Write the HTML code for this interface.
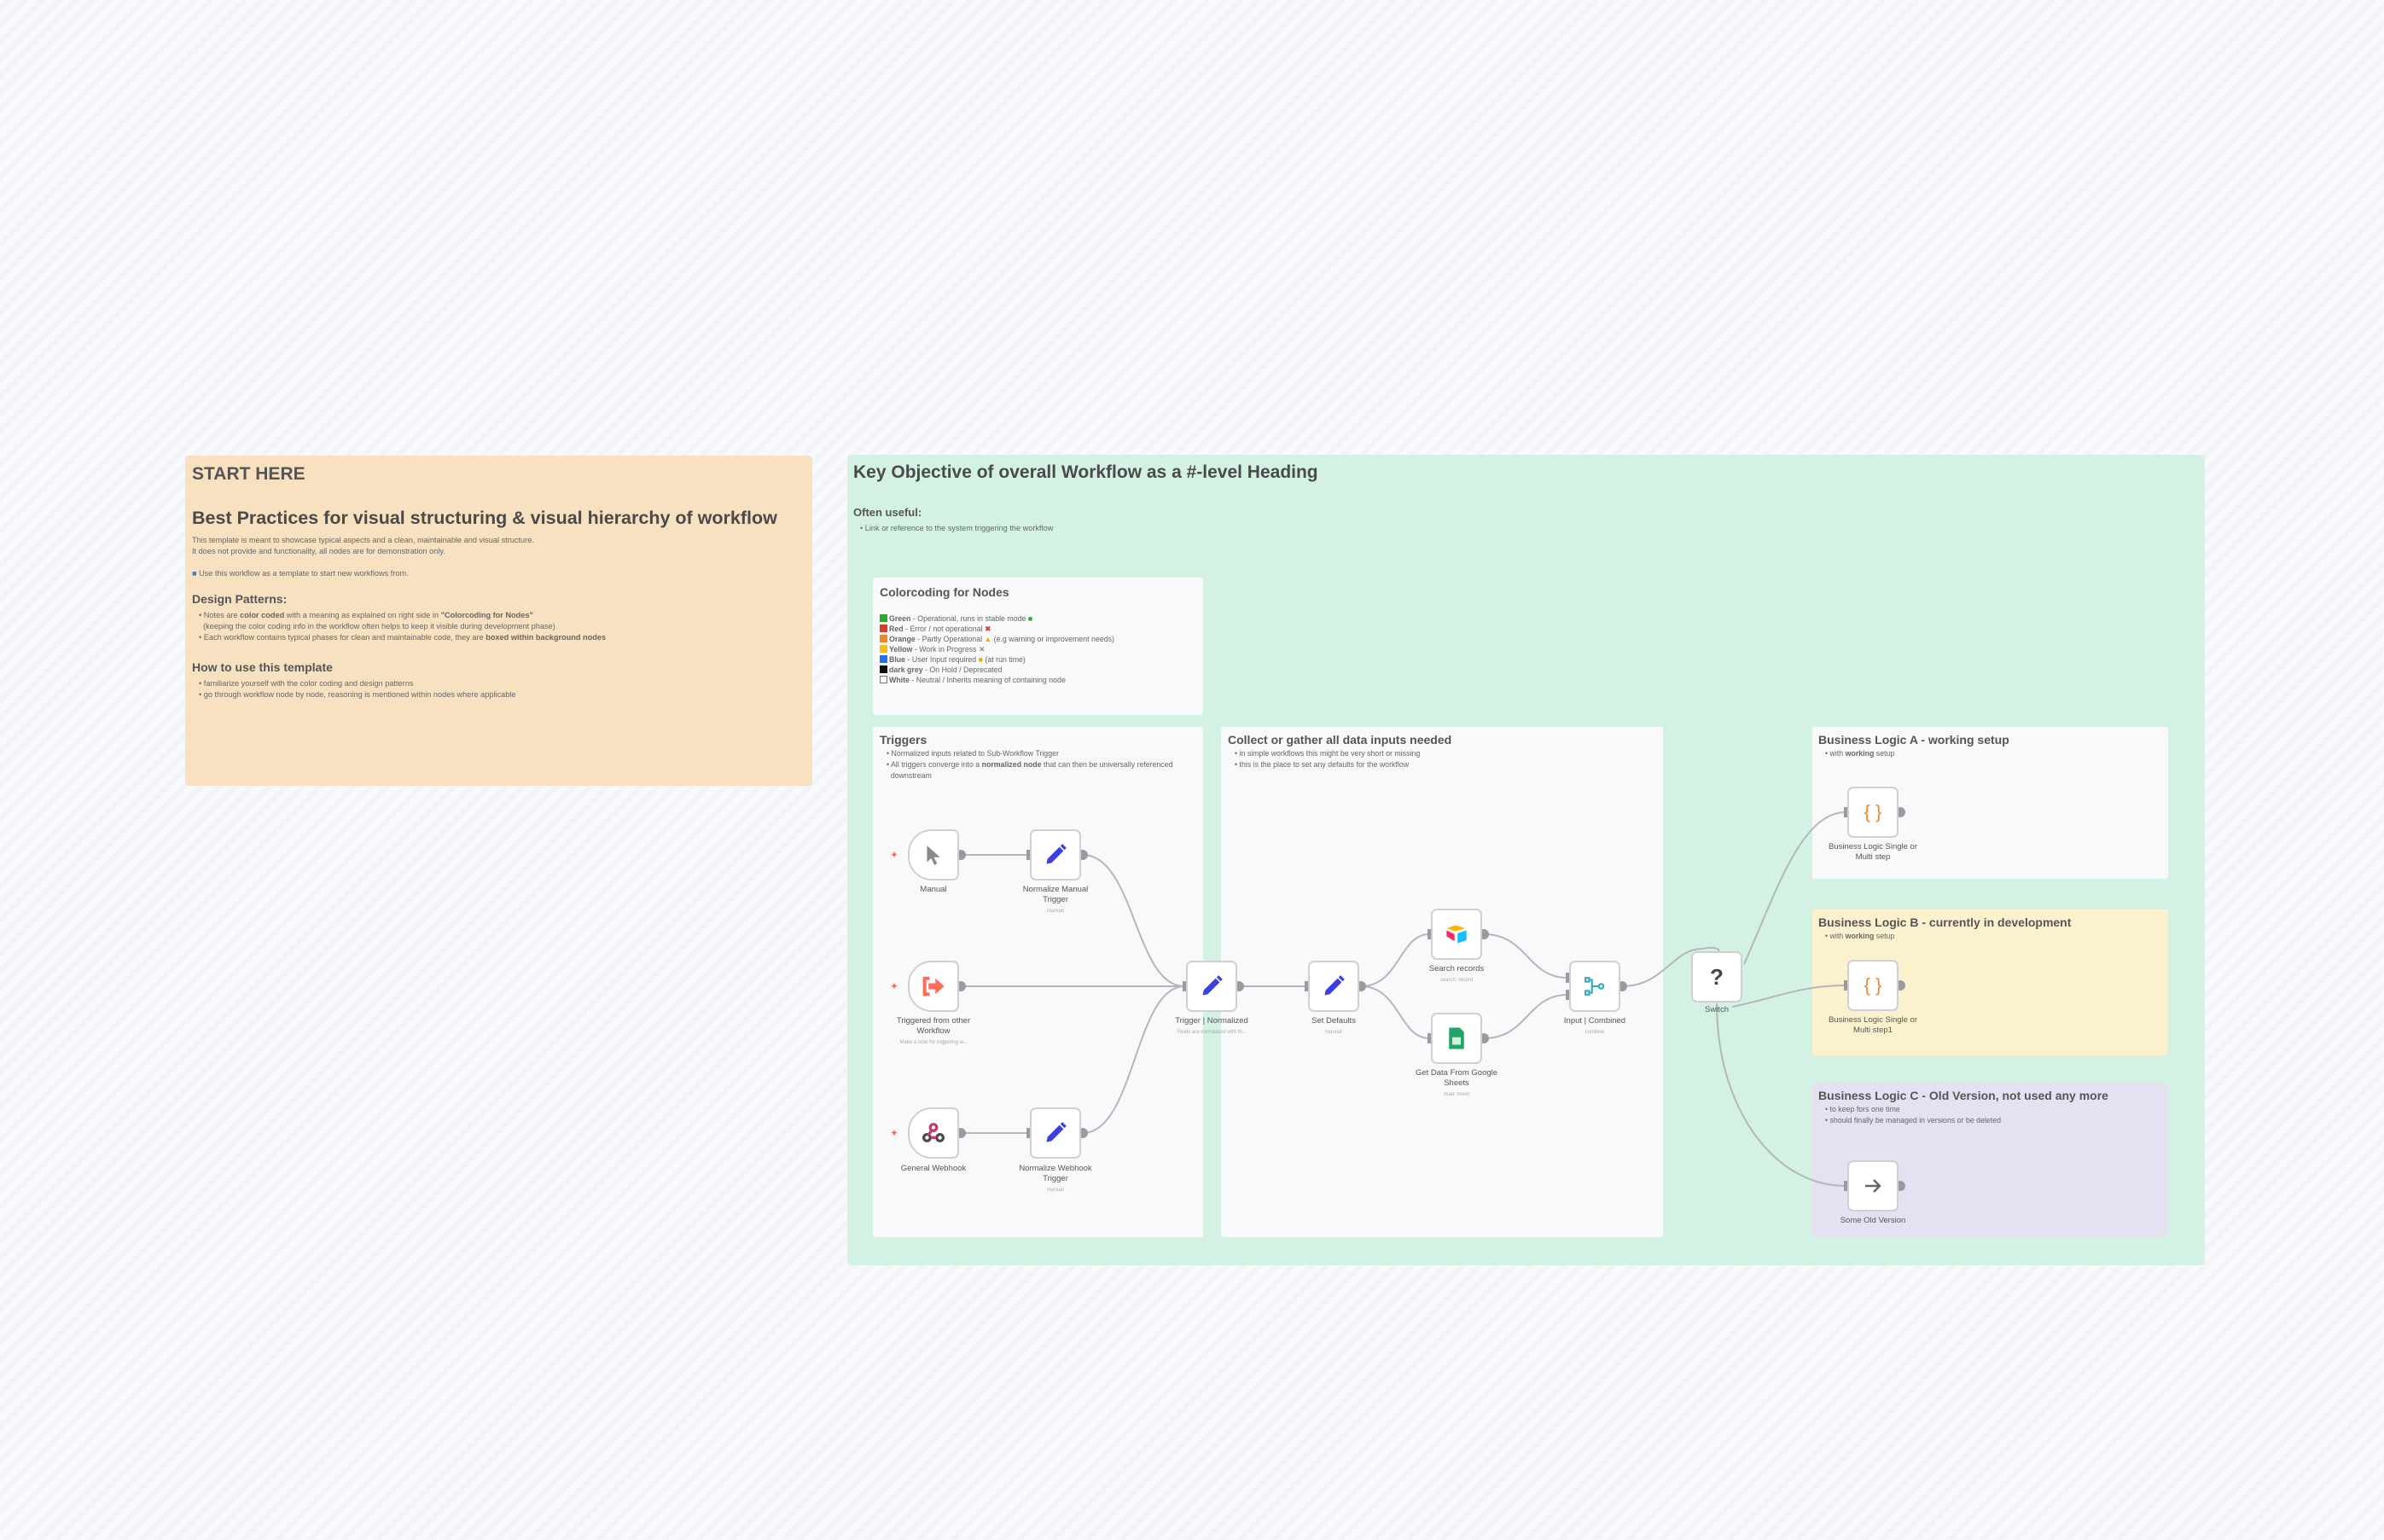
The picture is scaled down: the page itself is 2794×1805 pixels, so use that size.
<!DOCTYPE html>
<html><head><meta charset="utf-8"><style>
*{box-sizing:border-box;margin:0;padding:0}
body{width:2794px;height:1805px;overflow:hidden;position:relative;font-family:"Liberation Sans",sans-serif;color:#444;
background:repeating-linear-gradient(-45deg,#f8f9fb 0,#f8f9fb 8px,#f3f4f7 8px,#f3f4f7 14px);}
.note{position:absolute;border-radius:4px}
.wn{position:absolute;background:#f8f9fb;border-radius:3px}
.h2{font-size:14px;font-weight:bold;color:#555}
.sm{font-size:9.2px;color:#666;line-height:13px}
ul{list-style:none;padding-left:8px}
ul li:before{content:"• ";}
.node{position:absolute;width:60px;height:60px;background:#fff;border:2px solid #cfd0d4;border-radius:7px;display:flex;align-items:center;justify-content:center}
.trig{border-radius:28px 7px 7px 28px}
.lbl{position:absolute;width:140px;text-align:center;font-size:9.5px;color:#555;line-height:12px}
.sub{font-size:6px;color:#aaa}
.sw{display:inline-block;width:9px;height:9px;vertical-align:-1px;margin-right:2px}
</style></head><body>

<div class="note" style="left:217px;top:534px;width:735px;height:387px;background:#f8e1c0">
 <div style="position:absolute;left:8px;top:10px;font-size:21px;font-weight:bold;color:#555">START HERE</div>
 <div style="position:absolute;left:8px;top:61px;font-size:21.5px;font-weight:bold;color:#4a4a4a">Best Practices for visual structuring &amp; visual hierarchy of workflow</div>
 <div class="sm" style="position:absolute;left:8px;top:93px">This template is meant to showcase typical aspects and a clean, maintainable and visual structure.<br>It does not provide and functionality, all nodes are for demonstration only.<br><br><span style="color:#3a7bd5">■</span> Use this workflow as a template to start new workflows from.</div>
 <div style="position:absolute;left:8px;top:160px;font-size:14px;font-weight:bold;color:#555">Design Patterns:</div>
 <div class="sm" style="position:absolute;left:8px;top:181px"><ul><li>Notes are <b>color coded</b> with a meaning as explained on right side in <b>"Colorcoding for Nodes"</b><br>&nbsp;&nbsp;(keeping the color coding info in the workflow often helps to keep it visible during development phase)</li><li>Each workflow contains typical phases for clean and maintainable code, they are <b>boxed within background nodes</b></li></ul></div>
 <div style="position:absolute;left:8px;top:240px;font-size:14px;font-weight:bold;color:#555">How to use this template</div>
 <div class="sm" style="position:absolute;left:8px;top:261px"><ul><li>familiarize yourself with the color coding and design patterns</li><li>go through workflow node by node, reasoning is mentioned within nodes where applicable</li></ul></div>
</div>

<div class="note" style="left:993px;top:533px;width:1591px;height:950px;background:#d4f2e4">
 <div style="position:absolute;left:7px;top:9px;font-size:21px;font-weight:bold;color:#4a4a4a">Key Objective of overall Workflow as a #-level Heading</div>
 <div style="position:absolute;left:7px;top:60px;font-size:13px;font-weight:bold;color:#555">Often useful:</div>
 <div class="sm" style="position:absolute;left:7px;top:80px"><ul><li>Link or reference to the system triggering the workflow</li></ul></div>
</div>

<div class="wn" style="left:1023px;top:677px;width:387px;height:161px">
 <div class="h2" style="position:absolute;left:8px;top:9px">Colorcoding for Nodes</div>
 <div class="sm" style="position:absolute;left:8px;top:42px;line-height:12px;font-size:8.8px">
 <span class="sw" style="background:#2ea62e"></span><b>Green</b> - Operational, runs in stable mode <span style="color:#2ea62e">■</span><br>
 <span class="sw" style="background:#d63b2b"></span><b>Red</b> - Error / not operational <span style="color:#e03030">✖</span><br>
 <span class="sw" style="background:#f0872e"></span><b>Orange</b> - Partly Operational <span style="color:#e8b400">▲</span> (e.g warning or improvement needs)<br>
 <span class="sw" style="background:#f4bd1e"></span><b>Yellow</b> - Work in Progress ✕<br>
 <span class="sw" style="background:#2c6ee8"></span><b>Blue</b> - User Input required <span style="color:#e8b400">■</span> (at run time)<br>
 <span class="sw" style="background:#111"></span><b>dark grey</b> - On Hold / Deprecated<br>
 <span class="sw" style="background:#fff;border:1px solid #777"></span><b>White</b> - Neutral / Inherits meaning of containing node</div>
</div>

<div class="wn" style="left:1023px;top:852px;width:387px;height:598px">
 <div class="h2" style="position:absolute;left:8px;top:7px">Triggers</div>
 <div class="sm" style="position:absolute;left:8px;top:25px;line-height:13px;font-size:8.8px"><ul><li>Normalized inputs related to Sub-Workflow Trigger</li><li>All triggers converge into a <b>normalized node</b> that can then be universally referenced<br>&nbsp;&nbsp;downstream</li></ul></div>
</div>
<div class="wn" style="left:1431px;top:852px;width:518px;height:598px">
 <div class="h2" style="position:absolute;left:8px;top:7px">Collect or gather all data inputs needed</div>
 <div class="sm" style="position:absolute;left:8px;top:25px;line-height:13px;font-size:8.8px"><ul><li>in simple workflows this might be very short or missing</li><li>this is the place to set any defaults for the workflow</li></ul></div>
</div>
<div class="wn" style="left:2124px;top:852px;width:417px;height:178px">
 <div class="h2" style="position:absolute;left:7px;top:7px">Business Logic A - working setup</div>
 <div class="sm" style="position:absolute;left:7px;top:25px;font-size:8.8px"><ul><li>with <b>working</b> setup</li></ul></div>
</div>
<div class="wn" style="left:2124px;top:1066px;width:417px;height:171px;background:#fcf1cf">
 <div class="h2" style="position:absolute;left:7px;top:7px">Business Logic B - currently in development</div>
 <div class="sm" style="position:absolute;left:7px;top:25px;font-size:8.8px"><ul><li>with <b>working</b> setup</li></ul></div>
</div>
<div class="wn" style="left:2124px;top:1269px;width:417px;height:181px;background:#e4e1f2">
 <div class="h2" style="position:absolute;left:7px;top:7px">Business Logic C - Old Version, not used any more</div>
 <div class="sm" style="position:absolute;left:7px;top:25px;line-height:13px;font-size:8.8px"><ul><li>to keep fors one time</li><li>should finally be managed in versions or be deleted</li></ul></div>
</div>

<svg style="position:absolute;left:0;top:0" width="2794" height="1805" fill="none" stroke="#b5b6ba" stroke-width="2">
 <path d="M1126 1002 H1205"/>
 <path d="M1269 1002 C1330 1002 1330 1156 1388 1156"/>
 <path d="M1126 1156 H1388"/>
 <path d="M1269 1328 C1330 1328 1330 1156 1388 1156"/>
 <path d="M1126 1328 H1205"/>
 <path d="M1452 1156 H1531"/>
 <path d="M1595 1156 C1640 1156 1640 1095 1675 1095"/>
 <path d="M1595 1156 C1640 1156 1640 1217 1675 1217"/>
 <path d="M1739 1095 C1790 1095 1790 1146 1837 1146"/>
 <path d="M1739 1217 C1790 1217 1790 1166 1837 1166"/>
 <path d="M1901 1156 C1950 1156 1960 1112 1995 1112 C2005 1110 2015 1110 2015 1116"/>
 <path d="M2044 1130 C2080 1050 2110 952 2163 952"/>
 <path d="M2030 1180 C2080 1170 2110 1155 2163 1155"/>
 <path d="M2012 1176 C2012 1300 2080 1390 2163 1390"/>
 <g fill="#9a9b9f" stroke="none">
  <circle cx="1126" cy="1002" r="6"/><circle cx="1269" cy="1002" r="6"/><circle cx="1126" cy="1156" r="6"/>
  <circle cx="1126" cy="1328" r="6"/><circle cx="1269" cy="1328" r="6"/><circle cx="1452" cy="1156" r="6"/>
  <circle cx="1595" cy="1156" r="6"/><circle cx="1739" cy="1095" r="6"/><circle cx="1739" cy="1217" r="6"/>
  <circle cx="1901" cy="1156" r="6"/><circle cx="2227" cy="952" r="6"/><circle cx="2227" cy="1155" r="6"/><circle cx="2227" cy="1390" r="6"/>
  <rect x="1203" y="996" width="4" height="12"/><rect x="1386" y="1150" width="4" height="12"/><rect x="1203" y="1322" width="4" height="12"/>
  <rect x="1529" y="1150" width="4" height="12"/><rect x="1673" y="1089" width="4" height="12"/><rect x="1673" y="1211" width="4" height="12"/>
  <rect x="1835" y="1140" width="4" height="12"/><rect x="1835" y="1160" width="4" height="12"/>
  <rect x="2161" y="946" width="4" height="12"/><rect x="2161" y="1149" width="4" height="12"/><rect x="2161" y="1384" width="4" height="12"/>
 </g>
 <g fill="#ff6d5a" stroke="none" font-size="12"><text x="1043" y="1006">✦</text><text x="1043" y="1160">✦</text><text x="1043" y="1332">✦</text></g>
</svg>

<div class="node trig" style="left:1064px;top:972px"><svg width="26" height="26" viewBox="0 0 24 24"><path d="M5 2 L5 20 L9.5 15.5 L13 23 L16 21.5 L12.5 14.5 L19 14.5 Z" fill="#8a8a8a"/></svg></div>
<div class="node" style="left:1207px;top:972px"><svg width="28" height="28" viewBox="0 0 24 24"><path d="M3 21 L4 16 L16 4 L20 8 L8 20 Z M17 3 L19 1 L23 5 L21 7 Z" fill="#3b40e0"/></svg></div>
<div class="node trig" style="left:1064px;top:1126px"><svg width="30" height="26" viewBox="0 0 26 22"><path d="M9 3 H4 V19 H9" stroke="#ff6d5a" stroke-width="3.5" fill="none"/><path d="M8 8 H15 V3 L24 11 L15 19 V14 H8 Z" fill="#ff6d5a"/></svg></div>
<div class="node trig" style="left:1064px;top:1298px"><svg width="26" height="26" viewBox="0 0 24 24" fill="none" stroke-width="3"><circle cx="12" cy="6" r="3.5" stroke="#c73a63"/><circle cx="5" cy="17" r="3.5" stroke="#4b4b4b"/><circle cx="19" cy="17" r="3.5" stroke="#4b4b4b"/><path d="M10 9 L6 15 M9 17 H15" stroke="#c73a63"/></svg></div>
<div class="node" style="left:1207px;top:1298px"><svg width="28" height="28" viewBox="0 0 24 24"><path d="M3 21 L4 16 L16 4 L20 8 L8 20 Z M17 3 L19 1 L23 5 L21 7 Z" fill="#3b40e0"/></svg></div>
<div class="node" style="left:1390px;top:1126px"><svg width="28" height="28" viewBox="0 0 24 24"><path d="M3 21 L4 16 L16 4 L20 8 L8 20 Z M17 3 L19 1 L23 5 L21 7 Z" fill="#3b40e0"/></svg></div>
<div class="node" style="left:1533px;top:1126px"><svg width="28" height="28" viewBox="0 0 24 24"><path d="M3 21 L4 16 L16 4 L20 8 L8 20 Z M17 3 L19 1 L23 5 L21 7 Z" fill="#3b40e0"/></svg></div>
<div class="node" style="left:1677px;top:1065px"><svg width="28" height="26" viewBox="0 0 24 22"><path d="M11 2 L21 5 L11 8 L2 5 Z" fill="#fcb400"/><path d="M13 10 L22 7 V17 L13 20 Z" fill="#18bfff"/><path d="M2 7 L10 11 V18 L2 13 Z" fill="#f82b60"/></svg></div>
<div class="node" style="left:1677px;top:1187px"><svg width="20" height="28" viewBox="0 0 16 22"><path d="M1 1 H11 L15 5 V21 H1 Z" fill="#23a566"/><rect x="4" y="10" width="8" height="7" fill="#fff" opacity=".8"/></svg></div>
<div class="node" style="left:1839px;top:1126px"><svg width="26" height="26" viewBox="0 0 24 24" fill="none" stroke="#3aa8c1" stroke-width="2"><rect x="2" y="3" width="4" height="4"/><rect x="2" y="17" width="4" height="4"/><circle cx="19" cy="12" r="2.5"/><path d="M6 5 H9 V19 H6 M9 12 H16.5"/></svg></div>
<div class="node" style="left:1982px;top:1115px;font-size:26px;font-weight:bold;color:#444">?</div>
<div class="node" style="left:2165px;top:922px;font-size:22px;color:#f0872e">{ }</div>
<div class="node" style="left:2165px;top:1125px;font-size:22px;color:#f0872e">{ }</div>
<div class="node" style="left:2165px;top:1360px"><svg width="24" height="24" viewBox="0 0 24 24" fill="none" stroke="#666" stroke-width="2.5"><path d="M3 12 H20 M13 5 L20 12 L13 19"/></svg></div>

<div class="lbl" style="left:1024px;top:1037px">Manual</div>
<div class="lbl" style="left:1167px;top:1037px">Normalize Manual<br>Trigger<br><span class="sub">manual</span></div>
<div class="lbl" style="left:1024px;top:1191px">Triggered from other<br>Workflow<br><span class="sub">Make a note for triggering w...</span></div>
<div class="lbl" style="left:1024px;top:1364px">General Webhook</div>
<div class="lbl" style="left:1167px;top:1364px">Normalize Webhook<br>Trigger<br><span class="sub">manual</span></div>
<div class="lbl" style="left:1350px;top:1191px">Trigger | Normalized<br><span class="sub">Fields are normalized with th...</span></div>
<div class="lbl" style="left:1493px;top:1191px">Set Defaults<br><span class="sub">manual</span></div>
<div class="lbl" style="left:1637px;top:1130px">Search records<br><span class="sub">search: record</span></div>
<div class="lbl" style="left:1637px;top:1252px">Get Data From Google<br>Sheets<br><span class="sub">read: sheet</span></div>
<div class="lbl" style="left:1799px;top:1191px">Input | Combined<br><span class="sub">combine</span></div>
<div class="lbl" style="left:1942px;top:1178px">Switch</div>
<div class="lbl" style="left:2125px;top:987px">Business Logic Single or<br>Multi step</div>
<div class="lbl" style="left:2125px;top:1190px">Business Logic Single or<br>Multi step1</div>
<div class="lbl" style="left:2125px;top:1425px">Some Old Version</div>
</body></html>
